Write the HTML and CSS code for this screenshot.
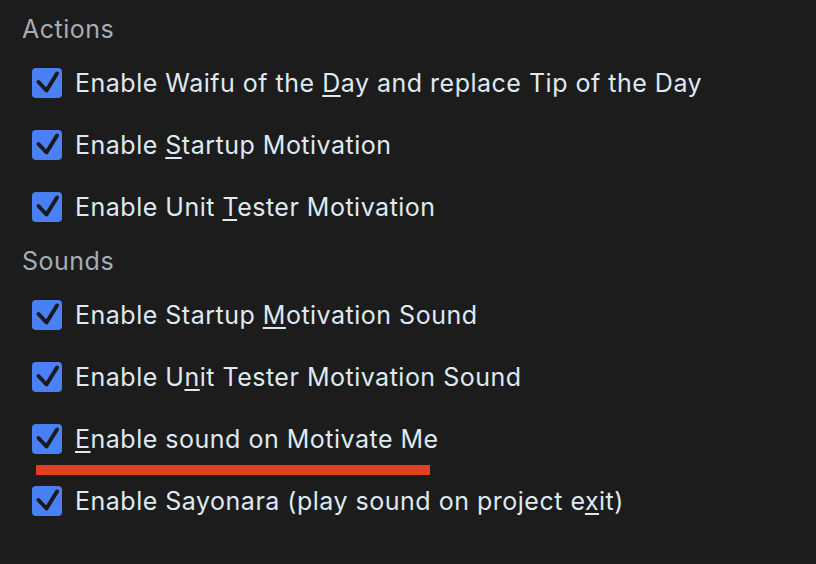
FILE: index.html
```html
<!DOCTYPE html>
<html lang="en">
<head>
    <meta charset="UTF-8">
    <title>Settings</title>
    <link rel="stylesheet" href="styles.css">
</head>
<body>
    <div class="panel">
        <div class="group-title">Actions</div>
        <label class="row">
            <span class="box"><svg viewBox="0 0 30 30"><path d="M6.5 14l8 8.5L25 5.5"/></svg></span>
            <span class="label">Enable Waifu of the <u>D</u>ay and replace Tip of the Day</span>
        </label>
        <label class="row">
            <span class="box"><svg viewBox="0 0 30 30"><path d="M6.5 14l8 8.5L25 5.5"/></svg></span>
            <span class="label">Enable <u>S</u>tartup Motivation</span>
        </label>
        <label class="row">
            <span class="box"><svg viewBox="0 0 30 30"><path d="M6.5 14l8 8.5L25 5.5"/></svg></span>
            <span class="label">Enable Unit <u>T</u>ester Motivation</span>
        </label>

        <div class="group-title">Sounds</div>
        <label class="row">
            <span class="box"><svg viewBox="0 0 30 30"><path d="M6.5 14l8 8.5L25 5.5"/></svg></span>
            <span class="label">Enable Startup <u>M</u>otivation Sound</span>
        </label>
        <label class="row">
            <span class="box"><svg viewBox="0 0 30 30"><path d="M6.5 14l8 8.5L25 5.5"/></svg></span>
            <span class="label">Enable U<u>n</u>it Tester Motivation Sound</span>
        </label>
        <label class="row marked">
            <span class="box"><svg viewBox="0 0 30 30"><path d="M6.5 14l8 8.5L25 5.5"/></svg></span>
            <span class="label"><u>E</u>nable sound on Motivate Me</span>
        </label>
        <label class="row">
            <span class="box"><svg viewBox="0 0 30 30"><path d="M6.5 14l8 8.5L25 5.5"/></svg></span>
            <span class="label">Enable Sayonara (play sound on project e<u>x</u>it)</span>
        </label>
    </div>
</body>
</html>
```

FILE: styles.css
```css
body {
    margin: 0;
    background-color: #1c1c1c;
    font-family: Inter, "Noto Sans", sans-serif;
    font-size: 25px;
    letter-spacing: 0.5px;
    color: #dfe9f2;
}

.panel {
    padding: 6px 0 0 0;
}

.group-title {
    height: 46px;
    line-height: 46px;
    padding-left: 22px;
    color: #a6adb3;
}

.row {
    position: relative;
    display: flex;
    align-items: center;
    gap: 13px;
    height: 62px;
    padding-left: 32px;
}

.box {
    width: 30px;
    height: 30px;
    border-radius: 4px;
    background-color: #4a80f6;
    flex: none;
}

.box svg {
    display: block;
    width: 30px;
    height: 30px;
}

.box path {
    fill: none;
    stroke: #1a1a1a;
    stroke-width: 4;
    stroke-linecap: round;
    stroke-linejoin: round;
}

.label u {
    text-decoration-thickness: 2px;
    text-underline-offset: 3px;
}

.marked::after {
    content: "";
    position: absolute;
    left: 36px;
    top: 57px;
    width: 394px;
    height: 10px;
    background-color: #e33d24;
}
```
